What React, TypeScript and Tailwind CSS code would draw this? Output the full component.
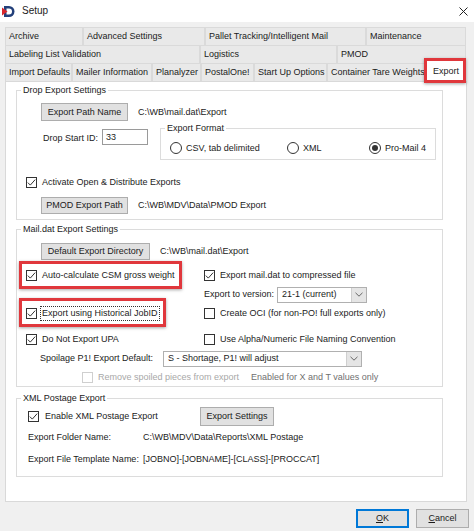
import type { ReactNode } from "react";

type TabDef = { label: string; w: string; selected?: boolean };

const row1: TabDef[] = [
  { label: "Archive", w: "w-[78px]" },
  { label: "Advanced Settings", w: "w-[122px]" },
  { label: "Pallet Tracking/Intelligent Mail", w: "w-[161px]" },
  { label: "Maintenance", w: "w-[100px]" },
];

const row2: TabDef[] = [
  { label: "Labeling List Validation", w: "w-[195px]" },
  { label: "Logistics", w: "w-[137px]" },
  { label: "PMOD", w: "w-[129px]" },
];

const row3: TabDef[] = [
  { label: "Import Defaults", w: "w-[67px]" },
  { label: "Mailer Information", w: "w-[80px]" },
  { label: "Planalyzer", w: "w-[49px]" },
  { label: "PostalOne!", w: "w-[53px]" },
  { label: "Start Up Options", w: "w-[73px]" },
  { label: "Container Tare Weights", w: "w-[99px]" },
  { label: "Export", w: "w-[38px]", selected: true },
];

const Tab = ({ tab }: { tab: TabDef }) => {
  if (tab.selected) {
    return (
      <div
        className={`relative -mb-px flex h-[22px] items-center border border-b-0 border-[#d9d9d9] bg-white pl-[6px] ${tab.w}`}
      >
        {tab.label}
        {/* annotation box */}
        <span className="pointer-events-none absolute -top-[3px] -left-[3px] h-[25px] w-[42px] border-[3px] border-[#e0373c] shadow-[0_1px_3px_rgba(0,0,0,0.35)]" />
      </div>
    );
  }
  return (
    <div
      className={`flex h-[18px] shrink-0 items-center overflow-hidden whitespace-nowrap border border-b-0 border-[#dadada] bg-[#e9e9e9] pl-[3px] ${tab.w}`}
    >
      {tab.label}
    </div>
  );
};

const Check = ({ checked = true, disabled = false }: { checked?: boolean; disabled?: boolean }) => (
  <span
    className={`flex h-[11px] w-[11px] shrink-0 items-center justify-center border bg-white ${
      disabled ? "border-[#cfcfcf]" : "border-[#333333]"
    }`}
  >
    {checked && (
      <svg width="9" height="9" viewBox="0 0 9 9">
        <path d="M0.8 4.6 L3.3 7.1 L8.2 1.6" fill="none" stroke="#333333" strokeWidth="1" />
      </svg>
    )}
  </span>
);

const Radio = ({ on = false }: { on?: boolean }) => (
  <span className="flex h-[12px] w-[12px] shrink-0 items-center justify-center rounded-full border border-[#333333] bg-white">
    {on && <span className="h-[6px] w-[6px] rounded-full bg-[#333333]" />}
  </span>
);

const Chevron = () => (
  <span className="flex h-full w-[15px] items-center justify-center border-l border-[#cfcfcf] bg-[#e5e5e5]">
    <svg width="8" height="5" viewBox="0 0 8 5">
      <path d="M0.5 0.8 L4 4.2 L7.5 0.8" fill="none" stroke="#666666" strokeWidth="1" />
    </svg>
  </span>
);

const Group = ({ title, className, children }: { title: string; className: string; children?: ReactNode }) => (
  <fieldset className={`border border-[#dcdcdc] ${className}`}>
    <legend className="ml-[4px] px-[2px] leading-[12px]">{title}</legend>
    {children}
  </fieldset>
);

const App = () => {
  return (
    <div className="h-[531px] w-[474px] overflow-hidden bg-[#f0f0f0] font-['Liberation_Sans',Arial,sans-serif] text-[9px] leading-none text-[#1b1b1b]">
      {/* title bar */}
      <div className="flex h-[22px] items-center bg-white">
        <svg className="ml-[2px]" width="13" height="13" viewBox="0 0 13 13">
          <path d="M2 1 H7 A5.5 5.5 0 0 1 7 12 H2 Z" fill="#23407a" />
          <path d="M4.5 3.5 H7 A3 3 0 0 1 7 9.5 H4.5 Z" fill="#ffffff" />
          <path d="M0 2.5 L5.5 6.5 L0 10.5 Z" fill="#d8262b" />
        </svg>
        <span className="ml-[7px] text-[10px]">Setup</span>
        <svg className="mr-[6px] ml-auto" width="9" height="9" viewBox="0 0 9 9">
          <path d="M0.5 0.5 L8.5 8.5 M8.5 0.5 L0.5 8.5" stroke="#222222" strokeWidth="1" />
        </svg>
      </div>

      {/* tabs */}
      <div className="mt-[5px] pl-[5px]">
        <div className="flex">
          {row1.map((t) => (
            <Tab key={t.label} tab={t} />
          ))}
        </div>
        <div className="flex">
          {row2.map((t) => (
            <Tab key={t.label} tab={t} />
          ))}
        </div>
        <div className="relative z-10 -mt-[3px] flex h-[21px] items-end">
          {row3.map((t) => (
            <Tab key={t.label} tab={t} />
          ))}
        </div>
      </div>

      {/* tab page */}
      <div className="mx-[5px] h-[421px] w-[462px] border border-[#d9d9d9] bg-white">
        <div className="ml-[10px] w-[427px]">
          <Group title="Drop Export Settings" className="mt-[2px] h-[136px]">
            <div className="mt-[7px] flex items-center">
              <div className="ml-[24px] flex h-[18px] w-[87px] items-center justify-center border border-[#adadad] bg-[#e1e1e1]">
                Export Path Name
              </div>
              <span className="ml-[10px]">C:\WB\mail.dat\Export</span>
            </div>
            <div className="flex">
              <div className="mt-[8px] flex h-[16px] w-[143px] items-center pl-[26px]">
                <span className="mt-[2px] w-[59px]">Drop Start ID:</span>
                <div className="flex h-[16px] w-[46px] items-center border border-[#9a9a9a] pl-[3px]">33</div>
              </div>
              <Group title="Export Format" className="mt-[1px] h-[38px] w-[276px]">
                <div className="mt-[8px] flex items-center">
                  <div className="ml-[9px] flex w-[117px] items-center gap-[4px]">
                    <Radio />
                    <span>CSV, tab delimited</span>
                  </div>
                  <div className="flex w-[82px] items-center gap-[4px]">
                    <Radio />
                    <span>XML</span>
                  </div>
                  <div className="flex items-center gap-[4px]">
                    <Radio on />
                    <span>Pro-Mail 4</span>
                  </div>
                </div>
              </Group>
            </div>
            <div className="mt-[16px] ml-[9px] flex h-[13px] items-center gap-[5px]">
              <Check />
              <span>Activate Open &amp; Distribute Exports</span>
            </div>
            <div className="mt-[8px] flex items-center">
              <div className="ml-[24px] flex h-[17px] w-[87px] items-center justify-center border border-[#adadad] bg-[#e1e1e1]">
                PMOD Export Path
              </div>
              <span className="ml-[10px]">C:\WB\MDV\Data\PMOD Export</span>
            </div>
          </Group>

          <Group title="Mail.dat Export Settings" className="mt-[3px] h-[164px]">
            <div className="mt-[8px] flex items-center">
              <div className="ml-[24px] flex h-[17px] w-[109px] items-center justify-center border border-[#adadad] bg-[#e1e1e1]">
                Default Export Directory
              </div>
              <span className="ml-[10px]">C:\WB\mail.dat\Export</span>
            </div>

            <div className="mt-[6px] flex h-[19px] items-center">
              <div className="relative ml-[9px] flex w-[178px] items-center gap-[5px]">
                <Check />
                <span>Auto-calculate CSM gross weight</span>
                <span className="pointer-events-none absolute -top-[9px] -left-[7px] h-[28px] w-[163px] border-[3px] border-[#e0373c] shadow-[0_1px_3px_rgba(0,0,0,0.35)]" />
              </div>
              <div className="flex items-center gap-[5px]">
                <Check />
                <span>Export mail.dat to compressed file</span>
              </div>
            </div>

            <div className="flex h-[19px] items-center">
              <div className="ml-[9px] w-[178px]" />
              <span className="w-[73px]">Export to version:</span>
              <div className="flex h-[16px] w-[90px] items-center border border-[#b0b0b0] bg-white">
                <span className="flex-1 pl-[4px]">21-1 (current)</span>
                <Chevron />
              </div>
            </div>

            <div className="flex h-[19px] items-center">
              <div className="relative ml-[9px] flex w-[178px] items-center gap-[4px]">
                <Check />
                <span className="px-[1px] py-[2px] outline-1 outline-dotted outline-[#333333]">
                  Export using Historical JobID
                </span>
                <span className="pointer-events-none absolute -top-[9px] -left-[7px] h-[29px] w-[147px] border-[3px] border-[#e0373c] shadow-[0_1px_3px_rgba(0,0,0,0.35)]" />
              </div>
              <div className="flex items-center gap-[5px]">
                <Check checked={false} />
                <span>Create OCI (for non-PO! full exports only)</span>
              </div>
            </div>

            <div className="mt-[7px] flex h-[19px] items-center">
              <div className="ml-[9px] flex w-[178px] items-center gap-[5px]">
                <Check />
                <span>Do Not Export UPA</span>
              </div>
              <div className="flex items-center gap-[5px]">
                <Check checked={false} />
                <span>Use Alpha/Numeric File Naming Convention</span>
              </div>
            </div>

            <div className="flex h-[19px] items-center">
              <span className="ml-[23px] w-[123px]">Spoilage P1! Export Default:</span>
              <div className="flex h-[16px] w-[199px] items-center border border-[#b0b0b0] bg-white">
                <span className="flex-1 pl-[4px]">S - Shortage, P1! will adjust</span>
                <Chevron />
              </div>
            </div>

            <div className="flex h-[19px] items-center">
              <div className="ml-[65px] flex items-center gap-[5px]">
                <Check checked={false} disabled />
                <span className="w-[153px] text-[#a8a8a8]">Remove spoiled pieces from export</span>
              </div>
              <span className="text-[#707070]">Enabled for X and T values only</span>
            </div>
          </Group>

          <Group title="XML Postage Export" className="mt-[5px] h-[85px]">
            <div className="mt-[3px] flex h-[19px] items-center">
              <div className="ml-[11px] flex w-[172px] items-center gap-[6px]">
                <Check />
                <span>Enable XML Postage Export</span>
              </div>
              <div className="flex h-[19px] w-[74px] items-center justify-center border border-[#adadad] bg-[#e1e1e1]">
                Export Settings
              </div>
            </div>
            <div className="mt-[2px] flex h-[19px] items-center">
              <span className="ml-[11px] w-[115px]">Export Folder Name:</span>
              <span>C:\WB\MDV\Data\Reports\XML Postage</span>
            </div>
            <div className="mt-[3px] flex h-[19px] items-center">
              <span className="ml-[11px] w-[115px]">Export File Template Name:</span>
              <span>[JOBNO]-[JOBNAME]-[CLASS]-[PROCCAT]</span>
            </div>
          </Group>
        </div>
      </div>

      {/* dialog buttons */}
      <div className="mt-[7px] flex justify-end gap-[7px] pr-[5px]">
        <div className="flex h-[19px] w-[53px] items-center justify-center border border-[#0078d7] bg-[#e1e1e1] shadow-[inset_0_0_0_1px_#0078d7]">
          <span>
            <span className="underline">O</span>K
          </span>
        </div>
        <div className="flex h-[19px] w-[53px] items-center justify-center border border-[#adadad] bg-[#e1e1e1]">
          <span>
            <span className="underline">C</span>ancel
          </span>
        </div>
      </div>
    </div>
  );
};

export default App;
